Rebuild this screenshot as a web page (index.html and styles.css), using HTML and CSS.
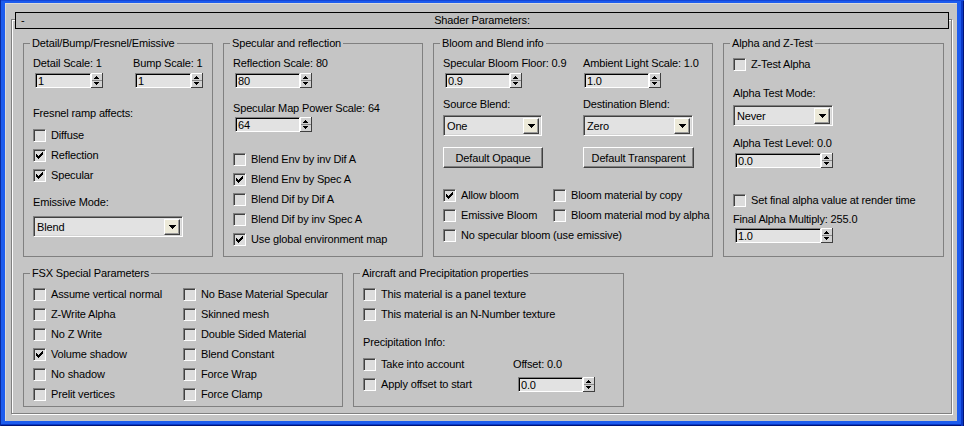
FILE: index.html
```html
<!DOCTYPE html>
<html>
<head>
<meta charset="utf-8">
<title>Shader Parameters</title>
<link rel="stylesheet" href="styles.css">
</head>
<body>
<svg class="defs" width="0" height="0" aria-hidden="true">
  <symbol id="spinArrows" viewBox="0 0 12 15">
    <rect width="12" height="15" fill="#d2d2d2"/>
    <path d="M0 0h12v1H1v14H0z" fill="#ffffff"/>
    <path d="M11 0h1v15H0v-1h11z" fill="#404040"/>
    <rect x="1" y="7" width="10" height="1" fill="#8a8a8a"/>
    <path d="M5 3h1v1h1v1h1v1H3V5h1V4h1z" fill="#000"/>
    <path d="M3 9h5v1h-1v1h-1v1h-1v-1h-1v-1h-1z" fill="#000"/>
  </symbol>
  <symbol id="comboArrow" viewBox="0 0 7 4">
    <path d="M0 0h7v1h-1v1h-1v1h-1v1h-1v-1h-1v-1h-1v-1h-1z" fill="#000"/>
  </symbol>
  <symbol id="check" viewBox="0 0 11 11">
    <path d="M2 4h1v3h-1zM3 5h1v3h-1zM4 6h1v3h-1zM5 5h1v3h-1zM6 4h1v3h-1zM7 3h1v3h-1zM8 2h1v3h-1z" fill="#000"/>
  </symbol>
</svg>

<div class="window">
  <div class="client">
    <div class="rollout">
      <div class="rtitle"><span class="minus">-</span><span class="rname">Shader Parameters:</span><span></span></div>

      <div class="row row1">
        <!-- Detail/Bump/Fresnel/Emissive -->
        <div class="group g1">
          <div class="legend">Detail/Bump/Fresnel/Emissive</div>
          <div class="pair mt13">
            <div class="col c100">
              <div class="lbl">Detail Scale: 1</div>
              <div class="spin mt3"><div class="field f56">1</div><svg class="arrows"><use href="#spinArrows"/></svg></div>
            </div>
            <div class="col">
              <div class="lbl">Bump Scale: 1</div>
              <div class="spin mt3"><div class="field f56">1</div><svg class="arrows"><use href="#spinArrows"/></svg></div>
            </div>
          </div>
          <div class="lbl mt19">Fresnel ramp affects:</div>
          <div class="list mt5">
            <div class="cb"><span class="box"></span>Diffuse</div>
            <div class="cb"><span class="box"><svg class="tick"><use href="#check"/></svg></span>Reflection</div>
            <div class="cb"><span class="box"><svg class="tick"><use href="#check"/></svg></span>Specular</div>
          </div>
          <div class="lbl mt11">Emissive Mode:</div>
          <div class="combo w150 mt7"><span>Blend</span><span class="cbtn"><svg class="tri"><use href="#comboArrow"/></svg></span></div>
        </div>

        <!-- Specular and reflection -->
        <div class="group g2">
          <div class="legend">Specular and reflection</div>
          <div class="lbl mt13">Reflection Scale: 80</div>
          <div class="spin mt3"><div class="field f65">80</div><svg class="arrows"><use href="#spinArrows"/></svg></div>
          <div class="lbl mt14">Specular Map Power Scale: 64</div>
          <div class="spin mt2"><div class="field f65">64</div><svg class="arrows"><use href="#spinArrows"/></svg></div>
          <div class="list mt17">
            <div class="cb"><span class="box"></span>Blend Env by inv Dif A</div>
            <div class="cb"><span class="box"><svg class="tick"><use href="#check"/></svg></span>Blend Env by Spec A</div>
            <div class="cb"><span class="box"></span>Blend Dif by Dif A</div>
            <div class="cb"><span class="box"></span>Blend Dif by inv Spec A</div>
            <div class="cb"><span class="box"><svg class="tick"><use href="#check"/></svg></span>Use global environment map</div>
          </div>
        </div>

        <!-- Bloom and Blend info -->
        <div class="group g3">
          <div class="legend">Bloom and Blend info</div>
          <div class="pair mt13">
            <div class="col c140">
              <div class="lbl">Specular Bloom Floor: 0.9</div>
              <div class="spin mt3"><div class="field f65">0.9</div><svg class="arrows"><use href="#spinArrows"/></svg></div>
            </div>
            <div class="col">
              <div class="lbl">Ambient Light Scale: 1.0</div>
              <div class="spin mt3 nudge"><div class="field f65">1.0</div><svg class="arrows"><use href="#spinArrows"/></svg></div>
            </div>
          </div>
          <div class="pair mt10">
            <div class="col c140">
              <div class="lbl">Source Blend:</div>
              <div class="combo w99 mt4"><span>One</span><span class="cbtn"><svg class="tri"><use href="#comboArrow"/></svg></span></div>
            </div>
            <div class="col">
              <div class="lbl">Destination Blend:</div>
              <div class="combo w110 mt4"><span>Zero</span><span class="cbtn"><svg class="tri"><use href="#comboArrow"/></svg></span></div>
            </div>
          </div>
          <div class="pair mt11">
            <div class="col c140"><div class="btn w100">Default Opaque</div></div>
            <div class="col"><div class="btn w111">Default Transparent</div></div>
          </div>
          <div class="bloomgrid mt17">
            <div class="cb"><span class="box"><svg class="tick"><use href="#check"/></svg></span>Allow bloom</div>
            <div class="cb"><span class="box"></span>Bloom material by copy</div>
            <div class="cb"><span class="box"></span>Emissive Bloom</div>
            <div class="cb"><span class="box"></span>Bloom material mod by alpha</div>
            <div class="cb span2"><span class="box"></span>No specular bloom (use emissive)</div>
          </div>
        </div>

        <!-- Alpha and Z-Test -->
        <div class="group g4">
          <div class="legend">Alpha and Z-Test</div>
          <div class="cb mt10"><span class="box"></span>Z-Test Alpha</div>
          <div class="lbl mt13">Alpha Test Mode:</div>
          <div class="combo w100 mt5"><span>Never</span><span class="cbtn"><svg class="tri"><use href="#comboArrow"/></svg></span></div>
          <div class="lbl mt11">Alpha Test Level: 0.0</div>
          <div class="spin mt3"><div class="field f86">0.0</div><svg class="arrows"><use href="#spinArrows"/></svg></div>
          <div class="cb mt22"><span class="box"></span>Set final alpha value at render time</div>
          <div class="lbl mt3">Final Alpha Multiply: 255.0</div>
          <div class="spin mt2"><div class="field f86">1.0</div><svg class="arrows"><use href="#spinArrows"/></svg></div>
        </div>
      </div>

      <div class="row row2">
        <!-- FSX Special Parameters -->
        <div class="group g5">
          <div class="legend">FSX Special Parameters</div>
          <div class="fsxgrid mt10">
            <div class="cb"><span class="box"></span>Assume vertical normal</div>
            <div class="cb"><span class="box"></span>No Base Material Specular</div>
            <div class="cb"><span class="box"></span>Z-Write Alpha</div>
            <div class="cb"><span class="box"></span>Skinned mesh</div>
            <div class="cb"><span class="box"></span>No Z Write</div>
            <div class="cb"><span class="box"></span>Double Sided Material</div>
            <div class="cb"><span class="box"><svg class="tick"><use href="#check"/></svg></span>Volume shadow</div>
            <div class="cb"><span class="box"></span>Blend Constant</div>
            <div class="cb"><span class="box"></span>No shadow</div>
            <div class="cb"><span class="box"></span>Force Wrap</div>
            <div class="cb"><span class="box"></span>Prelit vertices</div>
            <div class="cb"><span class="box"></span>Force Clamp</div>
          </div>
        </div>

        <!-- Aircraft and Precipitation properties -->
        <div class="group g6">
          <div class="legend">Aircraft and Precipitation properties</div>
          <div class="list mt10">
            <div class="cb"><span class="box"></span>This material is a panel texture</div>
            <div class="cb"><span class="box"></span>This material is an N-Number texture</div>
          </div>
          <div class="lbl mt12">Precipitation Info:</div>
          <div class="precip mt5">
            <div class="cb c150"><span class="box"></span>Take into account</div>
            <div class="lbl">Offset: 0.0</div>
          </div>
          <div class="precip">
            <div class="cb c153"><span class="box"></span>Apply offset to start</div>
            <div class="spin"><div class="field f65">0.0</div><svg class="arrows"><use href="#spinArrows"/></svg></div>
          </div>
        </div>
      </div>
    </div>
  </div>
</div>
</body>
</html>
```

FILE: styles.css
```css
* { box-sizing: border-box; }

body {
  margin: 0;
  font-family: "Liberation Sans", Arial, sans-serif;
  font-size: 11px;
  letter-spacing: -0.15px;
  color: #000;
}

.defs { position: absolute; width: 0; height: 0; overflow: hidden; }

/* window frame */
.window {
  width: 964px;
  height: 426px;
  padding: 3px 7px 5px 5px;
  background: #1d5cee;
  box-shadow:
    inset 1px 0 0 #0a2a9e,
    inset 0 1px 0 #1446d8,
    inset -1px 0 0 #001478,
    inset -3px 0 0 #0a38c6,
    inset 0 -1px 0 #001478,
    inset 0 -2px 0 #0a38c6;
}

.client {
  height: 100%;
  background: #c5c5c5;
  padding: 16px 0 0 6px;
  box-shadow: inset 1px 1px 0 #dadada;
}

/* rollout */
.rollout {
  width: 941px;
  height: 395px;
  border: 1px solid #808080;
  box-shadow: inset 1px 1px 0 #ffffff, 1px 1px 0 #ffffff;
  padding-left: 11px;
}

.rtitle {
  width: 934px;
  height: 17px;
  margin: -8px 0 0 -8px;
  border: 1px solid #000;
  background: #bdbdbd;
  display: grid;
  grid-template-columns: 20px 1fr 20px;
  align-items: center;
  line-height: 15px;
}
.rtitle .minus { padding-left: 5px; }
.rtitle .rname { text-align: center; }

.row { display: flex; gap: 10px; }
.row1 { margin-top: 14px; height: 214px; }
.row2 { margin-top: 16px; height: 134px; }

/* group boxes */
.group {
  height: 100%;
  border: 1px solid #808080;
  padding-left: 9px;
}
.g1 { width: 190px; }
.g2 { width: 200px; }
.g3 { width: 280px; }
.g4 { width: 221px; }
.g5 { width: 320px; }
.g6 { width: 271px; }

.legend {
  width: fit-content;
  height: 13px;
  line-height: 13px;
  margin: -7px 0 -6px -3px;
  padding: 0 2px;
  background: #c5c5c5;
  white-space: nowrap;
}

.lbl {
  height: 13px;
  line-height: 13px;
  white-space: nowrap;
}

.pair { display: flex; }
.col { display: flex; flex-direction: column; align-items: flex-start; }
.c100 { width: 100px; }
.c140 { width: 140px; }
.c150 { width: 150px; }
.c153 { width: 153px; }

/* spinner */
.spin { display: flex; height: 15px; margin-left: 2px; }
.spin.nudge { margin-left: 1px; }
.field {
  height: 15px;
  border: 1px solid;
  border-color: #808080 #ffffff #ffffff #808080;
  box-shadow: inset 1px 1px 0 #000;
  background: #e2e2e2;
  padding-left: 2px;
  line-height: 14px;
  white-space: nowrap;
}
.f56 { width: 56px; }
.f65 { width: 65px; }
.f86 { width: 86px; }
.arrows { display: block; width: 12px; height: 15px; flex: none; }

/* checkbox */
.cb {
  display: flex;
  align-items: center;
  height: 20px;
  white-space: nowrap;
}
.box {
  width: 13px;
  height: 13px;
  flex: none;
  margin-right: 5px;
  border: 1px solid;
  border-color: #808080 #ffffff #ffffff #808080;
  box-shadow: inset 1px 1px 0 #404040;
  background: #dcdcdc;
}
.tick { display: block; width: 11px; height: 11px; }

/* combo box */
.combo {
  display: flex;
  align-items: center;
  justify-content: space-between;
  height: 21px;
  border: 1px solid;
  border-color: #808080 #ffffff #ffffff #808080;
  box-shadow: inset 1px 1px 0 #404040, inset -1px -1px 0 #d4d4d4;
  background: #e2e2e2;
  padding: 0 2px 0 3px;
  white-space: nowrap;
}
.cbtn {
  width: 16px;
  height: 16px;
  display: flex;
  align-items: center;
  justify-content: center;
  background: #ece9d8;
  border: 1px solid;
  border-color: #ffffff #404040 #404040 #ffffff;
  box-shadow: inset -1px -1px 0 #9a9a9a;
}
.tri { display: block; width: 7px; height: 4px; }
.w99 { width: 99px; }
.w100 { width: 100px; }
.w110 { width: 110px; }
.w111 { width: 111px; }
.w150 { width: 150px; }

/* push button */
.btn {
  height: 21px;
  display: flex;
  align-items: center;
  justify-content: center;
  border: 1px solid;
  border-color: #ffffff #404040 #404040 #ffffff;
  box-shadow: inset -1px -1px 0 #808080;
  background: #c5c5c5;
  white-space: nowrap;
}

.bloomgrid {
  display: grid;
  grid-template-columns: 110px auto;
  grid-auto-rows: 20px;
}
.bloomgrid .span2 { grid-column: 1 / -1; }

.fsxgrid {
  display: grid;
  grid-template-columns: 150px auto;
  grid-auto-rows: 20px;
}

.precip { display: flex; align-items: center; height: 20px; }

/* spacing */
.mt2 { margin-top: 2px; }
.mt3 { margin-top: 3px; }
.mt4 { margin-top: 4px; }
.mt5 { margin-top: 5px; }
.mt7 { margin-top: 7px; }
.mt10 { margin-top: 10px; }
.mt11 { margin-top: 11px; }
.mt12 { margin-top: 12px; }
.mt13 { margin-top: 13px; }
.mt14 { margin-top: 14px; }
.mt17 { margin-top: 17px; }
.mt19 { margin-top: 19px; }
.mt22 { margin-top: 22px; }
```
